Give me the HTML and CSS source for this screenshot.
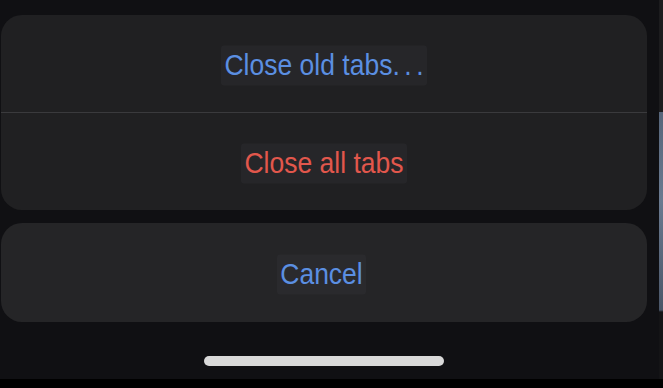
FILE: index.html
```html
<!DOCTYPE html>
<html lang="en">
<head>
    <meta charset="UTF-8">
    <meta name="viewport" content="width=device-width, initial-scale=1.0">
    <title>Close Tabs</title>
    <link rel="stylesheet" href="styles.css">
</head>
<body>

    <div class="screen">
        <div class="sheet">
            <div class="group">
                <button class="action"><span class="label">Close old tabs<span class="dots">..</span>.</span></button>
                <div class="divider"></div>
                <button class="action destructive"><span class="label">Close all tabs</span></button>
            </div>

            <div class="group cancel">
                <button class="action"><span class="label">Cancel</span></button>
            </div>

            <div class="home-bar"></div>
        </div>
        <div class="edge"></div>
    </div>
    <div class="bottom-band"></div>

</body>
</html>
```

FILE: styles.css
```css
body {
    font-family: "Liberation Sans", Arial, sans-serif;
    background-color: #000;
    margin: 0;
    padding: 0;
    width: 663px;
    height: 388px;
    overflow: hidden;
}

.screen {
    display: flex;
    height: 379px;
    background-color: #101013; /* dimmed backdrop */
}

.sheet {
    width: 646px;
    margin-left: 1px;
    padding-top: 15px;
    display: flex;
    flex-direction: column;
}

.group {
    background-color: #202022;
    border-radius: 21px;
    display: flex;
    flex-direction: column;
    overflow: hidden;
}

.group.cancel {
    margin-top: 13px;
    background-color: #252527;
}

.action {
    height: 97px;
    border: none;
    background: transparent;
    display: flex;
    align-items: center;
    justify-content: center;
    font-family: inherit;
    font-size: 26.5px;
    color: #5b8fe2; /* system blue */
    cursor: pointer;
    padding: 3px 0 0;
}

.cancel .action {
    height: 99px;
    padding-right: 5px;
}

.action.destructive {
    color: #e2574c; /* system red */
    padding-top: 4px;
}

.label {
    display: inline-block;
    transform: scaleY(1.08);
    background-color: #262629;
    padding: 3px 3px;
    border-radius: 3px;
}

.dots {
    letter-spacing: 4.5px;
}

.cancel .label {
    background-color: #2a2a2d;
}

.divider {
    height: 1px;
    background-color: #3a3a3d;
}

.home-bar {
    width: 240px;
    height: 10px;
    border-radius: 5px;
    background-color: #d9d9d9;
    margin: 34px auto 0;
}

.edge {
    width: 4px;
    margin-left: 12px;
    background: linear-gradient(to bottom, #1c1c1e 0, #1c1c1e 112px, #56657a 112px, #6a7a90 200px, #4a5668 310px, #141416 312px);
}

.bottom-band {
    height: 9px;
    background-color: #000;
}
```
